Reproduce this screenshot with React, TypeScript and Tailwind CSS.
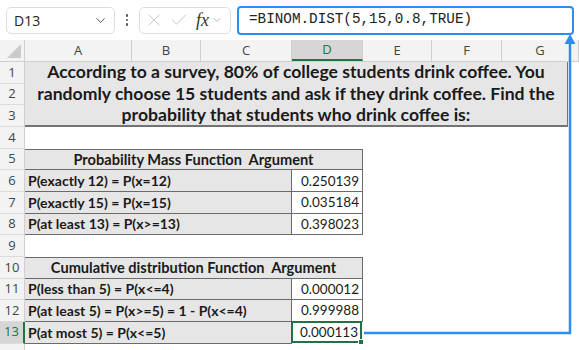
import { ChevronDown, X, Check } from "lucide-react";

const cal = { fontFamily: "Lato, 'Open Sans', sans-serif" };

const RowHead = ({ n, active = false }: { n?: number; active?: boolean }) => (
  <div
    className={
      "w-[25px] h-[21.67px] shrink-0 flex items-center justify-center text-[13px] border-b border-[#dcdcdc] " +
      (active
        ? "bg-[#d6d6d6] text-[#217346] border-r-2 border-r-[#217346]"
        : "bg-[#f3f3f3] text-[#444] border-r border-r-[#cfcfcf]")
    }
    style={{ fontFamily: "'Open Sans', sans-serif" }}
  >
    {n}
  </div>
);

const TitleRow = ({ n, text }: { n: number; text: string }) => (
  <div className="flex">
    <RowHead n={n} />
    <div
      className="w-[338px] h-[21.67px] bg-[#e7e6e6] border-t border-r border-b border-[#6b6b6b] flex items-center justify-center font-bold text-[14.6px] text-[#1a1a1a] whitespace-pre"
      style={cal}
    >
      {text}
    </div>
  </div>
);

const DataRow = ({
  n,
  label,
  value,
  selected = false,
}: {
  n: number;
  label: string;
  value: string;
  selected?: boolean;
}) => (
  <div className="flex">
    <RowHead n={n} active={selected} />
    <div
      className="w-[267px] h-[21.67px] bg-[#e7e6e6] border-r border-b border-[#6b6b6b] flex items-center pl-[3px] font-bold text-[14px] text-[#1a1a1a]"
      style={cal}
    >
      {label}
    </div>
    <div
      className={
        "w-[71px] h-[21.67px] bg-white flex items-center justify-end text-[13.5px] text-[#1a1a1a] relative " +
        (selected
          ? "border-2 border-[#217346] -ml-[1px] -mt-[1px] pr-[2px]"
          : "border-r border-b border-[#6b6b6b] pr-[3px]")
      }
      style={cal}
    >
      {value}
      {selected && (
        <div className="absolute -right-[4px] -bottom-[4px] w-[6px] h-[6px] bg-[#217346] border border-white" />
      )}
    </div>
  </div>
);

const EmptyRow = ({ n }: { n?: number }) => (
  <div className="flex">
    <RowHead n={n} />
    <div className="h-[21.67px] flex-1 bg-white" />
  </div>
);

export default function App() {
  const colHeads = [
    { l: "A", w: 107 },
    { l: "B", w: 69 },
    { l: "C", w: 91 },
    { l: "D", w: 71 },
    { l: "E", w: 69 },
    { l: "F", w: 70 },
    { l: "G", w: 77 },
  ];
  return (
    <div className="w-[579px] h-[350px] bg-white relative overflow-hidden">
      {/* formula bar */}
      <div className="h-[40px] flex items-center">
        <div className="ml-[6px] w-[109px] h-[27px] border border-[#dedede] rounded-[5px] flex items-center justify-between pl-[7px] pr-[6px] text-[14px] text-[#222]" style={{ fontFamily: "'Open Sans', sans-serif" }}>
          D13
          <ChevronDown size={15} strokeWidth={1.6} className="text-[#555]" />
        </div>
        <div className="w-[24px] flex flex-col items-center gap-[2px]">
          <div className="w-[2.5px] h-[2.5px] rounded-full bg-[#555]" />
          <div className="w-[2.5px] h-[2.5px] rounded-full bg-[#555]" />
          <div className="w-[2.5px] h-[2.5px] rounded-full bg-[#555]" />
        </div>
        <div className="w-[92px] h-[27px] border border-[#dedede] rounded-[5px] flex items-center pl-[4px] gap-[5px]">
          <X size={20} strokeWidth={1.1} className="text-[#c2c2c2]" />
          <Check size={20} strokeWidth={1.1} className="text-[#c2c2c2]" />
          <span className="italic text-[18px] text-[#333] ml-[2px] leading-none" style={{ fontFamily: "'Liberation Serif', serif" }}>
            fx
          </span>
          <ChevronDown size={12} strokeWidth={1.4} className="text-[#999] -ml-[3px]" />
        </div>
        <div className="ml-[6px] w-[337px] h-[29px] border-2 border-[#2b8ef0] rounded-[4px] flex items-center pl-[10px] text-[14.3px] text-[#222]" style={{ fontFamily: "'Liberation Mono', monospace" }}>
          =BINOM.DIST(5,15,0.8,TRUE)
        </div>
      </div>

      {/* column headers */}
      <div className="flex h-[22px] bg-[#f3f3f3] border-b border-[#cfcfcf]">
        <div className="w-[25px] shrink-0 border-r border-[#cfcfcf] relative">
          <div className="absolute right-[3px] bottom-[3px] w-0 h-0 border-l-[14px] border-l-transparent border-b-[14px] border-b-[#cacaca]" />
        </div>
        {colHeads.map((c) =>
          c.l === "D" ? (
            <div
              key={c.l}
              className="shrink-0 flex items-center justify-center text-[13px] text-[#217346] bg-[#d6d6d6] border-r border-[#cfcfcf] border-b-2 border-b-[#217346]"
              style={{ width: c.w, fontFamily: "'Open Sans', sans-serif" }}
            >
              {c.l}
            </div>
          ) : (
            <div
              key={c.l}
              className="shrink-0 flex items-center justify-center text-[13px] text-[#444] border-r border-[#cfcfcf]"
              style={{ width: c.w, fontFamily: "'Open Sans', sans-serif" }}
            >
              {c.l}
            </div>
          )
        )}
      </div>

      {/* rows 1-3 merged */}
      <div className="flex">
        <div className="flex flex-col">
          <RowHead n={1} />
          <RowHead n={2} />
          <RowHead n={3} />
        </div>
        <div
          className="w-[543px] h-[65px] bg-[#e7e6e6] border-b-2 border-r border-[#737373] flex flex-col items-center justify-center text-center font-bold text-[17.6px] leading-[21.5px] text-[#1a1a1a] whitespace-nowrap"
          style={cal}
        >
          <div>According to a survey, 80% of college students drink coffee. You</div>
          <div>randomly choose 15 students and ask if they drink coffee. Find the</div>
          <div>probability that students who drink coffee is:</div>
        </div>
      </div>

      <EmptyRow n={4} />
      <TitleRow n={5} text="Probability Mass Function  Argument" />
      <DataRow n={6} label="P(exactly 12) = P(x=12)" value="0.250139" />
      <DataRow n={7} label="P(exactly 15) = P(x=15)" value="0.035184" />
      <DataRow n={8} label="P(at least 13) = P(x>=13)" value="0.398023" />
      <EmptyRow n={9} />
      <TitleRow n={10} text="Cumulative distribution Function  Argument" />
      <DataRow n={11} label="P(less than 5) = P(x<=4)" value="0.000012" />
      <DataRow n={12} label="P(at least 5) = P(x>=5) = 1 - P(x<=4)" value="0.999988" />
      <DataRow n={13} label="P(at most 5) = P(x<=5)" value="0.000113" selected />
      <EmptyRow />

      {/* arrow from D13 to formula bar */}
      <svg className="absolute left-0 top-0 pointer-events-none" width="579" height="350">
        <path d="M364 333 H570 V42" fill="none" stroke="#2b8ef0" strokeWidth="2.5" />
        <polygon points="564.5,44 570,34 575.5,44" fill="#2b8ef0" />
      </svg>
    </div>
  );
}
